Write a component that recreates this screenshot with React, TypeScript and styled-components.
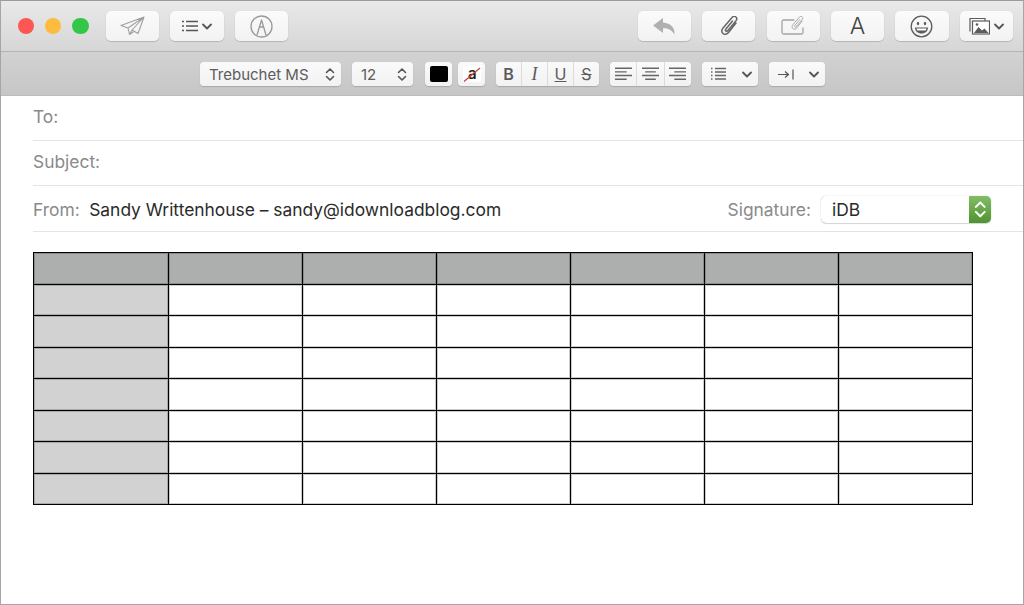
import React from "react";
import styled, { createGlobalStyle } from "styled-components";

const GlobalStyle = createGlobalStyle`
  html, body {
    margin: 0;
    padding: 0;
    background: #fff;
    font-family: "Inter", "Liberation Sans", sans-serif;
  }
`;

const Window = styled.div`
  width: 1024px;
  height: 605px;
  box-sizing: border-box;
  border: 1px solid #a6a6a6;
  border-top-color: #9c9c9c;
  background: #fff;
  overflow: hidden;
`;

const TitleBar = styled.div`
  height: 51px;
  box-sizing: border-box;
  display: flex;
  align-items: center;
  padding: 0 10px 0 16.5px;
  background: linear-gradient(#e9e9e9, #d6d6d6);
  border-bottom: 1px solid #b4b4b4;
`;

const Lights = styled.div`
  display: flex;
  gap: 10.8px;
  margin-right: 17.5px;
`;

const Light = styled.span<{ $color: string }>`
  width: 16.5px;
  height: 16.5px;
  border-radius: 50%;
  background: ${(p) => p.$color};
`;

const ToolGroup = styled.div`
  display: flex;
  gap: 11.1px;
`;

const RightGroup = styled(ToolGroup)`
  margin-left: auto;
`;

const ToolButton = styled.div`
  width: 53.3px;
  height: 30px;
  display: flex;
  align-items: center;
  justify-content: center;
  gap: 4px;
  border-radius: 5px;
  background: linear-gradient(#fbfbfb, #f2f2f2);
  box-shadow: 0 1px 1px rgba(0, 0, 0, 0.16), 0 0 1px rgba(0, 0, 0, 0.1);
  color: #5a5a5a;
`;

const FontLetter = styled.span`
  font-size: 23px;
  font-weight: 300;
  color: #444;
  line-height: 1;
`;

const FormatBar = styled.div`
  height: 44px;
  box-sizing: border-box;
  display: flex;
  align-items: center;
  padding: 1px 0 0 199px;
  background: linear-gradient(#d2d2d2, #c6c6c6);
  border-bottom: 1px solid #bdbdbd;
`;

const FormatControl = styled.div<{ $width: number; $gap?: number }>`
  width: ${(p) => p.$width}px;
  height: 24px;
  box-sizing: border-box;
  display: flex;
  align-items: center;
  justify-content: space-between;
  padding: 0 6px 0 9px;
  margin-right: ${(p) => p.$gap ?? 11}px;
  border-radius: 4px;
  background: linear-gradient(#fafafa, #f2f2f2);
  box-shadow: 0 1px 1px rgba(0, 0, 0, 0.16);
  font-size: 15px;
  color: #5c5c5c;
`;

const Swatch = styled(FormatControl)`
  padding: 0;
  justify-content: center;
`;

const ColorChip = styled.span`
  width: 18px;
  height: 16px;
  border-radius: 2px;
  background: #000;
`;

const Segmented = styled.div<{ $width: number }>`
  width: ${(p) => p.$width}px;
  height: 24px;
  display: flex;
  margin-right: 11px;
  border-radius: 4px;
  overflow: hidden;
  background: linear-gradient(#fafafa, #f2f2f2);
  box-shadow: 0 1px 1px rgba(0, 0, 0, 0.16);
`;

const Segment = styled.div<{ $italic?: boolean; $bold?: boolean; $under?: boolean; $strike?: boolean }>`
  flex: 1;
  display: flex;
  align-items: center;
  justify-content: center;
  font-size: ${(p) => (p.$italic ? 18 : 16)}px;
  color: #5c5c5c;
  font-family: ${(p) => (p.$italic ? '"Liberation Serif", serif' : "inherit")};
  font-style: ${(p) => (p.$italic ? "italic" : "normal")};
  font-weight: ${(p) => (p.$bold ? 600 : 400)};
  text-decoration: ${(p) => (p.$under ? "underline" : p.$strike ? "line-through" : "none")};
  & + & {
    border-left: 1px solid #dcdcdc;
  }
`;

const HeaderRow = styled.div<{ $height?: number; $top?: number }>`
  height: ${(p) => p.$height ?? 45}px;
  box-sizing: border-box;
  margin-left: 32px;
  display: flex;
  align-items: center;
  padding: ${(p) => p.$top ?? 0}px 0 ${(p) => (p.$top ? 0 : 4)}px;
  border-bottom: 1px solid #e4e4e4;
  font-size: 17.4px;
  color: #8a8a8a;
`;

const FromName = styled.span`
  margin-left: 9.5px;
  color: #2b2b2b;
`;

const SignatureLabel = styled.span`
  margin-left: auto;
  margin-right: 10px;
`;

const SignatureSelect = styled.div`
  width: 170px;
  height: 27px;
  box-sizing: border-box;
  margin-right: 32px;
  display: flex;
  align-items: center;
  justify-content: space-between;
  padding-left: 11px;
  border-radius: 5px;
  background: #fff;
  box-shadow: 0 0 1px rgba(0, 0, 0, 0.35), 0 1px 1px rgba(0, 0, 0, 0.14);
  color: #2b2b2b;
  overflow: hidden;
`;

const SelectArrows = styled.div`
  width: 22.5px;
  height: 27px;
  display: flex;
  align-items: center;
  justify-content: center;
  background: linear-gradient(#82bd66, #4f9330);
`;

const Body = styled.div`
  padding: 20px 0 0 32px;
`;

const Table = styled.table`
  width: 940px;
  table-layout: fixed;
  border-collapse: collapse;
`;

const Col = styled.col<{ $width: number }>`
  width: ${(p) => p.$width}px;
`;

const Cell = styled.td<{ $tone?: "head" | "side" }>`
  height: 30.5px;
  padding: 0;
  border: 1px solid #000;
  box-shadow: inset 0 0 0 1px rgba(0, 0, 0, 0.2);
  background: ${(p) => (p.$tone === "head" ? "#adafae" : p.$tone === "side" ? "#d2d2d2" : "#fff")};
`;

const UpDown = ({ color = "#555", scale = 1 }: { color?: string; scale?: number }) => (
  <svg width={10 * scale} height={15 * scale} viewBox="0 0 10 15" fill="none" stroke={color} strokeWidth="1.6" strokeLinecap="round" strokeLinejoin="round">
    <path d="M1.5 5.5 5 2l3.5 3.5M1.5 9.5 5 13l3.5-3.5" />
  </svg>
);

const Chevron = () => (
  <svg width="10" height="7" viewBox="0 0 10 7" fill="none" stroke="#555" strokeWidth="1.8" strokeLinecap="round" strokeLinejoin="round">
    <path d="M1 1.5 5 5.5l4-4" />
  </svg>
);

const SendIcon = () => (
  <svg width="25" height="20" viewBox="0 0 25 20" fill="none" stroke="#a0a0a0" strokeWidth="1.1" strokeLinejoin="round">
    <path d="M24 1 1 9.5l7 2.5L24 1 12 14l6 3.5L24 1ZM8 12l1.5 6.5L12 14M9.5 18.500l4-2.700" />
  </svg>
);

const ListIcon = () => (
  <svg width="16" height="12" viewBox="0 0 16 12" stroke="#555" strokeWidth="1.3">
    <path d="M0 1.500h2M4 1.500h12M0 6h2M4 6h12M0 10.500h2M4 10.500h12" />
  </svg>
);

const MarkupIcon = () => (
  <svg width="23" height="23" viewBox="0 0 23 23" fill="none" stroke="#9a9a9a" strokeWidth="1.3" strokeLinejoin="round">
    <circle cx="11.500" cy="11.500" r="10.500" />
    <path d="M7 20 11.500 5 16 20M9.500 12h4" />
  </svg>
);

const ReplyIcon = () => (
  <svg width="23" height="17" viewBox="0 0 23 17" fill="#b0b0b0">
    <path d="M10 0 0 7.500 10 15v-4.800c5.500 0 8.800 1.800 11.500 6.300.5-6.800-3.500-11.300-11.500-12V0Z" />
  </svg>
);

const ClipPath = "M17 7 9.500 16.500c-1.600 2-4 2.300-5.500 1-1.500-1.300-1.500-3.600.1-5.600L13 1.600c1.100-1.300 2.800-1.500 3.900-.6 1.100.9 1.100 2.500 0 3.900l-8 9.700c-.6.700-1.500.9-2.100.4-.6-.5-.5-1.400.1-2.100L13.500 5";

const AttachIcon = () => (
  <svg width="20" height="20" viewBox="0 0 20 20" fill="none" stroke="#666" strokeWidth="1.5" strokeLinecap="round">
    <path d={ClipPath} />
  </svg>
);

const AttachBoxIcon = () => (
  <svg width="24" height="20" viewBox="0 0 24 20" fill="none" stroke="#a4a4a4" strokeWidth="1.3" strokeLinecap="round">
    <path d="M13 4H2.500A1.500 1.500 0 0 0 1 5.500v11A1.500 1.500 0 0 0 2.500 18h18a1.500 1.500 0 0 0 1.500-1.500V12" />
    <path transform="translate(9 0) scale(.72)" d={ClipPath} />
  </svg>
);

const EmojiIcon = () => (
  <svg width="23" height="23" viewBox="0 0 23 23" fill="none" stroke="#5c5c5c" strokeWidth="1.3">
    <circle cx="11.500" cy="11.500" r="10.300" />
    <ellipse cx="8" cy="8.500" rx="1.200" ry="1.700" fill="#5c5c5c" stroke="none" />
    <ellipse cx="15" cy="8.500" rx="1.200" ry="1.700" fill="#5c5c5c" stroke="none" />
    <path d="M5 12.500h13c0 3.700-2.800 6-6.500 6s-6.500-2.300-6.500-6Z" fill="#5c5c5c" stroke="none" />
    <path d="M6.500 13.500h10c-.2 1-.5 1.500-1 2h-8c-.5-.5-.8-1-1-2Z" fill="#fff" stroke="none" />
  </svg>
);

const PhotoIcon = () => (
  <svg width="21" height="18" viewBox="0 0 21 18" fill="none" stroke="#5c5c5c" strokeWidth="1.200">
    <path d="M1 14.500V1.500h15V4" />
    <rect x="3.500" y="4" width="17" height="13" fill="#fff" />
    <path d="m5 16 4.500-6 3.500 3.500 2.500-2 4 4.500H5Z" fill="#5c5c5c" stroke="none" />
    <circle cx="8" cy="7.500" r="1.300" fill="#5c5c5c" stroke="none" />
  </svg>
);

const AlignIcon = ({ lines }: { lines: string }) => (
  <svg width="17" height="14" viewBox="0 0 16 13" stroke="#666" strokeWidth="1.400">
    <path d={lines} />
  </svg>
);

const BulletsIcon = () => (
  <svg width="15" height="14" viewBox="0 0 15 14" stroke="#666" strokeWidth="1.300">
    <path d="M0 1.500h1.500M0 5h1.500M0 8.500h1.500M0 12h1.500M4 1.500h11M4 5h11M4 8.500h11M4 12h11" />
  </svg>
);

const IndentIcon = () => (
  <svg width="16" height="11" viewBox="0 0 16 11" fill="none" stroke="#555" strokeWidth="1.200">
    <path d="M0 5.500h10M7 2.500l3.500 3-3.500 3M15 .5v10" />
  </svg>
);

const NoColorIcon = () => (
  <svg width="20" height="18" viewBox="0 0 20 18">
    <rect x="1" y="1" width="18" height="16" fill="#fff" />
    <text x="6" y="14" fontFamily="Inter, sans-serif" fontSize="15" fontWeight="600" fill="#222">a</text>
    <path d="M2 16.500 18 3" stroke="#c9453f" strokeWidth="1.300" />
  </svg>
);

const columnWidths = [135, 134, 134, 134, 134, 134, 134];
const rows = [0, 1, 2, 3, 4, 5, 6, 7];

const App = () => (
  <>
    <GlobalStyle />
    <Window>
      <TitleBar>
        <Lights>
          <Light $color="#fc5753" />
          <Light $color="#fdbc40" />
          <Light $color="#33c748" />
        </Lights>
        <ToolGroup>
          <ToolButton><SendIcon /></ToolButton>
          <ToolButton><ListIcon /><Chevron /></ToolButton>
          <ToolButton><MarkupIcon /></ToolButton>
        </ToolGroup>
        <RightGroup>
          <ToolButton><ReplyIcon /></ToolButton>
          <ToolButton><AttachIcon /></ToolButton>
          <ToolButton><AttachBoxIcon /></ToolButton>
          <ToolButton><FontLetter>A</FontLetter></ToolButton>
          <ToolButton><EmojiIcon /></ToolButton>
          <ToolButton><PhotoIcon /><Chevron /></ToolButton>
        </RightGroup>
      </TitleBar>
      <FormatBar>
        <FormatControl $width={141}>Trebuchet MS<UpDown /></FormatControl>
        <FormatControl $width={61} $gap={12}>12<UpDown /></FormatControl>
        <Swatch $width={27} $gap={6}><ColorChip /></Swatch>
        <Swatch $width={27}><NoColorIcon /></Swatch>
        <Segmented $width={103}>
          <Segment $bold>B</Segment>
          <Segment $italic>I</Segment>
          <Segment $under>U</Segment>
          <Segment $strike>S</Segment>
        </Segmented>
        <Segmented $width={81}>
          <Segment><AlignIcon lines="M0 1h16M0 4.500h11M0 8h16M0 11.500h11" /></Segment>
          <Segment><AlignIcon lines="M0 1h16M3 4.500h10M0 8h16M3 11.500h10" /></Segment>
          <Segment><AlignIcon lines="M0 1h16M5 4.500h11M0 8h16M5 11.500h11" /></Segment>
        </Segmented>
        <FormatControl $width={56}><BulletsIcon /><Chevron /></FormatControl>
        <FormatControl $width={56}><IndentIcon /><Chevron /></FormatControl>
      </FormatBar>
      <HeaderRow>To:</HeaderRow>
      <HeaderRow>Subject:</HeaderRow>
      <HeaderRow $height={46} $top={2}>
        From:
        <FromName>Sandy Writtenhouse – sandy@idownloadblog.com</FromName>
        <SignatureLabel>Signature:</SignatureLabel>
        <SignatureSelect>
          iDB
          <SelectArrows><UpDown color="#fff" scale={1.25} /></SelectArrows>
        </SignatureSelect>
      </HeaderRow>
      <Body>
        <Table>
          <colgroup>
            {columnWidths.map((width, i) => (
              <Col key={i} $width={width} />
            ))}
          </colgroup>
          <tbody>
            {rows.map((row) => (
              <tr key={row}>
                {columnWidths.map((_, col) => (
                  <Cell key={col} $tone={row === 0 ? "head" : col === 0 ? "side" : undefined} />
                ))}
              </tr>
            ))}
          </tbody>
        </Table>
      </Body>
    </Window>
  </>
);

export default App;
